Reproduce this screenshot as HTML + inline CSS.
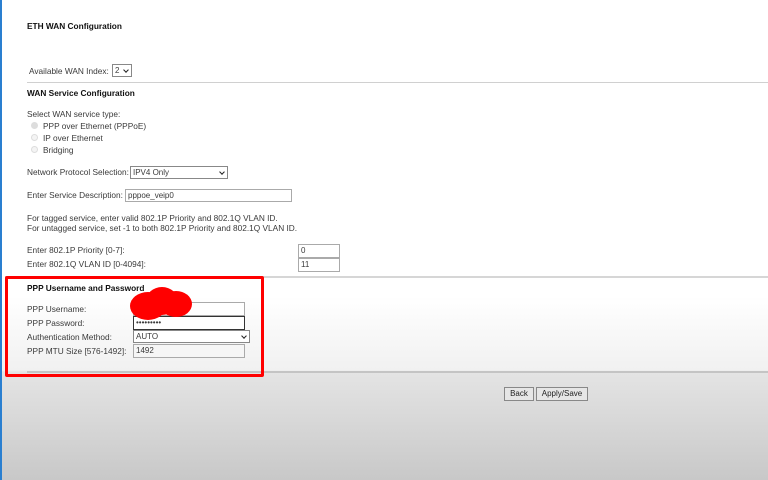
<!DOCTYPE html>
<html><head><style>
html,body{margin:0;padding:0;width:768px;height:480px;overflow:hidden;}
body{position:relative;font-family:"Liberation Sans",Arial,sans-serif;font-size:8.3px;color:#3a3a3a;
background:linear-gradient(#fff 0,#fff 296px,#f1f1f1 370px,#e4e4e4 372px,#d8d8d8 420px,#c8c8c8 480px);}
.t{position:absolute;white-space:nowrap;line-height:10px;}
.b{font-weight:bold;color:#111;}
.box{position:absolute;background:#fff;border:1px solid #aaa;box-sizing:border-box;font-size:8px;line-height:12px;padding-left:2px;}
.sel{position:absolute;background:#fff;border:1px solid #888;box-sizing:border-box;font-size:8px;line-height:11px;padding-left:2px;}
.sel:after{content:"";position:absolute;right:3px;top:3px;width:3px;height:3px;border-right:1.3px solid #222;border-bottom:1.3px solid #222;transform:rotate(45deg);}
.line{position:absolute;height:1px;background:#d0d0d0;}
.rad{position:absolute;width:7px;height:7px;border-radius:50%;border:1px solid #ddd;background:#f4f4f4;box-sizing:border-box;}
.btn{position:absolute;border:1px solid #888;background:#e6e6e6;box-sizing:border-box;font-size:8px;line-height:12px;text-align:center;color:#222;}
</style></head><body>
<div style="position:absolute;left:0;top:0;width:2px;height:480px;background:#2a7fd0"></div>
<div class="t b" style="left:27px;top:21px">ETH WAN Configuration</div>
<div class="t" style="left:29px;top:66px">Available WAN Index:</div>
<div class="sel" style="left:112px;top:64px;width:20px;height:13px">2</div>
<div class="line" style="left:27px;top:82px;width:741px"></div>
<div class="t b" style="left:27px;top:88px">WAN Service Configuration</div>
<div class="t" style="left:27px;top:109px">Select WAN service type:</div>
<div class="rad" style="left:31px;top:122px;background:#ddd"></div><div class="t" style="left:43px;top:121px">PPP over Ethernet (PPPoE)</div>
<div class="rad" style="left:31px;top:134px"></div><div class="t" style="left:43px;top:133px">IP over Ethernet</div>
<div class="rad" style="left:31px;top:146px"></div><div class="t" style="left:43px;top:145px">Bridging</div>
<div class="t" style="left:27px;top:167px">Network Protocol Selection:</div>
<div class="sel" style="left:130px;top:166px;width:98px;height:13px">IPV4 Only</div>
<div class="t" style="left:27px;top:190px">Enter Service Description:</div>
<div class="box" style="left:125px;top:189px;width:167px;height:13px">pppoe_veip0</div>
<div class="t" style="left:27px;top:213px">For tagged service, enter valid 802.1P Priority and 802.1Q VLAN ID.</div>
<div class="t" style="left:27px;top:223px">For untagged service, set -1 to both 802.1P Priority and 802.1Q VLAN ID.</div>
<div class="t" style="left:27px;top:245px">Enter 802.1P Priority [0-7]:</div>
<div class="box" style="left:298px;top:244px;width:42px;height:14px">0</div>
<div class="t" style="left:27px;top:259px">Enter 802.1Q VLAN ID [0-4094]:</div>
<div class="box" style="left:298px;top:258px;width:42px;height:14px">11</div>
<div class="line" style="left:5px;top:276px;width:763px;height:2px;background:#d6d6d6"></div>
<div class="t b" style="left:27px;top:283px">PPP Username and Password</div>
<div class="t" style="left:27px;top:304px">PPP Username:</div>
<div class="box" style="left:133px;top:302px;width:112px;height:14px"></div>
<div class="t" style="left:27px;top:318px">PPP Password:</div>
<div class="box" style="left:133px;top:316px;width:112px;height:14px;border:1.5px solid #333;line-height:11px">•••••••••</div>
<div class="t" style="left:27px;top:332px">Authentication Method:</div>
<div class="sel" style="left:133px;top:330px;width:117px;height:13px">AUTO</div>
<div class="t" style="left:27px;top:346px">PPP MTU Size [576-1492]:</div>
<div class="box" style="left:133px;top:344px;width:112px;height:14px;background:#f6f6f6">1492</div>
<div style="position:absolute;left:130px;top:292px;width:36px;height:28px;border-radius:50%;background:#f00"></div>
<div style="position:absolute;left:146px;top:287px;width:32px;height:28px;border-radius:50%;background:#f00"></div>
<div style="position:absolute;left:160px;top:291px;width:32px;height:26px;border-radius:50%;background:#f00"></div>
<div class="line" style="left:27px;top:371px;width:741px;height:2px;background:#c4c4c4"></div>
<div style="position:absolute;left:5px;top:276px;width:259px;height:101px;border:3px solid #f00;box-sizing:border-box;border-radius:2px"></div>
<div class="btn" style="left:504px;top:387px;width:30px;height:14px">Back</div>
<div class="btn" style="left:536px;top:387px;width:52px;height:14px">Apply/Save</div>
</body></html>
